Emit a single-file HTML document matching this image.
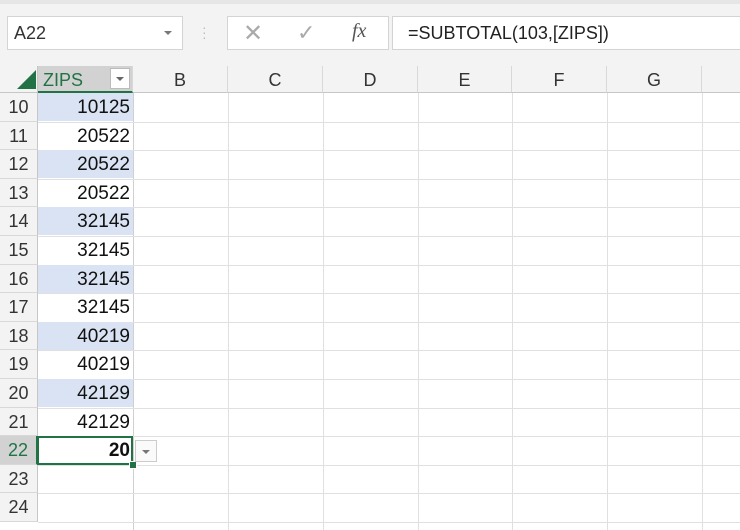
<!DOCTYPE html><html><head><style>
body{margin:0;width:740px;height:530px;overflow:hidden;background:#fff;font-family:"Liberation Sans",sans-serif;position:relative}
.a{position:absolute}
.top{left:0;top:0;width:740px;height:66px;background:#f3f3f3}
.box{background:#fff;border:1px solid #d4d4d4;height:32px;top:16px}
.t{font-size:18px;color:#333}
.ch{top:66px;height:27px;background:#f3f3f3;border-right:1px solid #d8d8d8;border-bottom:1px solid #c6c6c6;text-align:center;line-height:28px;font-size:18px;color:#333;box-sizing:border-box}
.rh{left:0;width:38px;background:#f3f3f3;border-bottom:1px solid #d8d8d8;border-right:1px solid #c6c6c6;box-sizing:border-box;text-align:center;font-size:18px;color:#333}
.hl{left:38px;height:1px;width:702px;background:#e0e0e0}
.vl{top:93px;width:1px;height:437px;background:#e0e0e0}
.c{left:38px;width:95px;text-align:right;font-size:19px;color:#111;box-sizing:border-box;padding-right:3px}
</style></head><body>
<div class="a top"></div>
<div class="a" style="left:0;top:0;width:740px;height:4px;background:#e6e6e6"></div>
<div class="a box" style="left:7px;width:174px"></div>
<div class="a t" style="left:14px;top:23px">A22</div>
<div class="a" style="left:164px;top:31px;border-left:4px solid transparent;border-right:4px solid transparent;border-top:4px solid #777"></div>
<div class="a" style="left:202px;top:25px;color:#bbb;font-size:14px;line-height:5px">·<br>·<br>·</div>
<div class="a box" style="left:227px;width:160px"></div>
<div class="a" style="left:243px;top:19px;font-size:24px;color:#aaa">✕</div>
<div class="a" style="left:297px;top:20px;font-size:22px;color:#aaa">✓</div>
<div class="a" style="left:352px;top:20px;font-size:20px;font-style:italic;font-family:'Liberation Serif',serif;color:#555">fx</div>
<div class="a box" style="left:392px;width:360px"></div>
<div class="a t" style="left:408px;top:23px;color:#222">=SUBTOTAL(103,[ZIPS])</div>

<div class="a ch" style="left:0;width:38px;border-right:1px solid #c6c6c6"></div>
<div class="a" style="left:17px;top:70px;width:0;height:0;border-left:19px solid transparent;border-bottom:19px solid #217346"></div>
<div class="a ch" style="left:38px;width:95px;background:#d2d2d2;border-bottom:2px solid #217346;text-align:left;padding-left:5px;color:#217346">ZIPS</div>
<div class="a" style="left:110px;top:68px;width:20px;height:21px;background:#fff;border:1px solid #bbb;box-sizing:border-box"></div>
<div class="a" style="left:116px;top:77px;border-left:4px solid transparent;border-right:4px solid transparent;border-top:4px solid #666"></div>
<div class="a ch" style="left:133px;width:95px">B</div>
<div class="a ch" style="left:228px;width:95px">C</div>
<div class="a ch" style="left:323px;width:95px">D</div>
<div class="a ch" style="left:418px;width:94px">E</div>
<div class="a ch" style="left:512px;width:95px">F</div>
<div class="a ch" style="left:607px;width:95px">G</div>
<div class="a ch" style="left:702px;width:50px"></div>

<div class="a vl" style="left:228px"></div><div class="a vl" style="left:323px"></div><div class="a vl" style="left:418px"></div><div class="a vl" style="left:512px"></div><div class="a vl" style="left:607px"></div><div class="a vl" style="left:702px"></div><div class="a vl" style="left:133px;background:#d0d0d0"></div>

<div id="rows"></div>
<script>
var v=["10125","20522","20522","20522","32145","32145","32145","32145","40219","40219","42129","42129"];
var h="";
for(var i=0;i<15;i++){var y=93+i*28.6;var n=10+i;
h+='<div class="a rh" style="top:'+y+'px;height:28.6px;line-height:28px;'+(n==22?'background:#d2d2d2;color:#217346;border-right:2px solid #217346':'')+'">'+n+'</div>';
h+='<div class="a hl" style="top:'+(y+28.6)+'px"></div>';
if(i<12)h+='<div class="a c" style="top:'+y+'px;height:28px;line-height:29px;'+(i%2==0?'background:#dae3f3;':'')+'">'+v[i]+'</div>';
}
document.getElementById("rows").innerHTML=h;
</script>
<div class="a" style="left:37px;top:436px;width:96px;height:29px;border:2px solid #217346;box-sizing:border-box;background:#fff"></div>
<div class="a" style="left:38px;top:436px;width:92px;text-align:right;font-size:19px;font-weight:bold;line-height:30px;color:#111">20</div>
<div class="a" style="left:129px;top:461px;width:6px;height:6px;background:#217346;border:1px solid #fff"></div>
<div class="a" style="left:135px;top:440px;width:22px;height:22px;border:1px solid #ccc;background:#fafafa;box-sizing:border-box"></div>
<div class="a" style="left:142px;top:450px;border-left:4px solid transparent;border-right:4px solid transparent;border-top:4px solid #777"></div>
</body></html>
